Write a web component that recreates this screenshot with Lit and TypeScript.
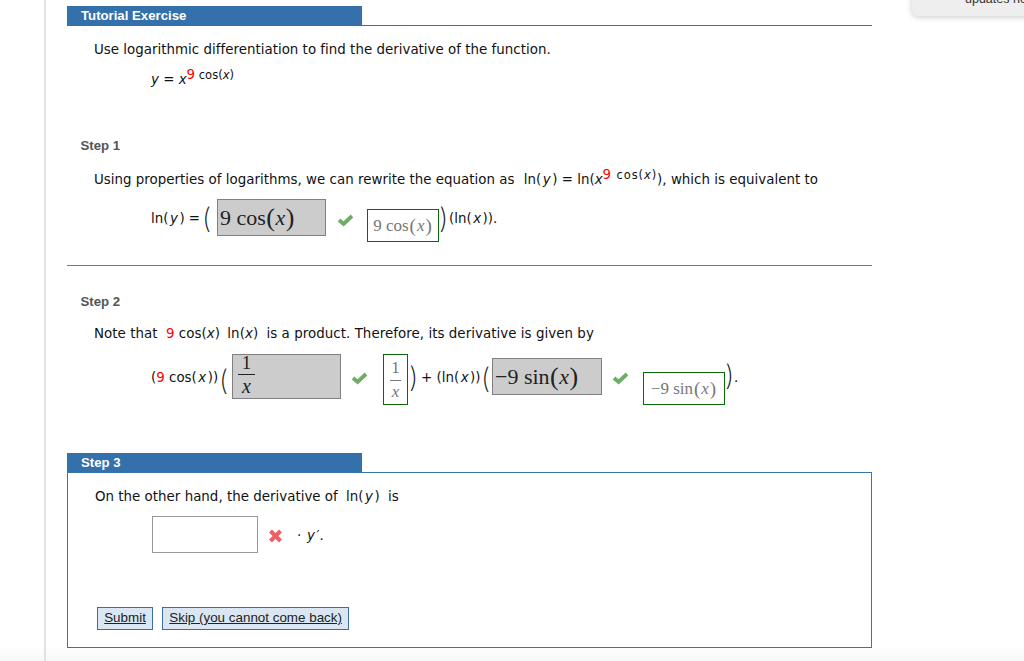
import { LitElement, html, css } from "lit";
import { customElement } from "lit/decorators.js";

const check = html`<svg class="mark" width="17" height="14" viewBox="0 0 17 14"><path d="M2 7 L6.6 11 L15 3" fill="none" stroke="#6cae63" stroke-width="3.8"/></svg>`;
const cross = html`<svg class="mark" width="15" height="14" viewBox="0 0 15 14"><path d="M2.5 2 L12.5 12 M12.5 2 L2.5 12" fill="none" stroke="#ee5f63" stroke-width="4"/></svg>`;

@customElement("app-root")
export class AppRoot extends LitElement {
  static styles = css`
    :host { display: block; height: 661px; overflow: hidden; position: relative; background: #fff; color: #111;
      font-family: "DejaVu Sans", Verdana, sans-serif; font-size: 13.4px; }
    .shade { position: absolute; left: 0; right: 0; bottom: 0; height: 16px; background: linear-gradient(#fff, #f8f8f8); }
    .page { position: relative; box-sizing: border-box; height: 661px; margin-left: 44px; width: 828px; padding: 6px 0 0 21px; border-left: 2px solid #e2e2e2; }
    .main { width: 805px; }
    .bar { height: 19px; width: 295px; background: #3470aa; color: #fff; font: bold 13.2px/20px "Liberation Sans", Arial, sans-serif; padding-left: 14px; box-sizing: border-box; }
    .rule { height: 1px; background: #3470aa; }
    .line { height: 20px; line-height: 22px; white-space: nowrap; padding-left: 27px; }
    .wide { letter-spacing: .05px; }
    .tight { letter-spacing: .015px; }
    .step { height: 20px; padding-left: 13.5px; font: bold 13.2px/22px "Liberation Sans", Arial, sans-serif; color: #555; }
    .eq { padding-left: 84px; }
    i { font-style: italic; }
    i.w { margin: 0 1.5px; }
    .red { color: #f00; }
    sup { font-size: 11.5px; line-height: 0; vertical-align: 5px; }
    sup.sw { letter-spacing: .9px; }
    sup .red { font-size: 13.4px; }
    .sp { display: inline-block; width: 4px; }
    .sp2 { display: inline-block; width: 3px; }
    .sp3 { display: inline-block; width: 5px; }
    .row { display: flex; align-items: flex-start; margin-left: 84px; white-space: nowrap; }
    .t { line-height: 22px; }
    .p { flex: none; width: 9px; text-align: center; font: 200 28px/38px Inter, sans-serif; color: #222; }
    .tex { font-family: "Liberation Serif", "Times New Roman", serif; }
    .ans { box-sizing: border-box; background: #ccc; border: 1px solid #808080; color: #222; font-size: 22px; display: flex; align-items: center; padding-left: 2px; }
    .given { box-sizing: border-box; border: 1px solid #0a6a0a; color: #777; font-size: 17px; display: flex; align-items: center; justify-content: center; background: #fff; }
    .bp { font-size: 26px; line-height: 1; margin: 0 .5px; }
    .gp { font-size: 19px; line-height: 1; margin: 0 1px; }
    .mark { flex: none; }
    .frac { display: inline-flex; flex-direction: column; align-items: center; }
    .frac span:first-child { border-bottom: 1px solid currentColor; width: 100%; text-align: center; }
    .big { font-size: 19px; margin: -3px 0 0 3px; width: 17px; }
    .big span:first-child { line-height: 16px; padding-bottom: 3px; }
    .big span:last-child { font-size: 20px; line-height: 20px; font-style: italic; margin-top: 1px; }
    .small { font-size: 17px; width: 11px; }
    .small span:first-child { line-height: 17px; padding-bottom: 4px; }
    .small span:last-child { font-style: italic; line-height: 17px; padding-top: 2px; }
    hr { border: 0; height: 1px; background: #777; margin: 23px 0 0; }
    .box { box-sizing: border-box; height: 176px; border: 1px solid #3a74ad; padding-top: 13px; width: 805px; }
    input { display: block; box-sizing: border-box; width: 106px; height: 37px; border: 1px solid #999; background: #fff; padding: 0; margin: 0; }
    .btns { display: flex; gap: 9px; margin: 54px 0 0 29px; }
    .btn { box-sizing: border-box; height: 23px; padding: 0 6.2px; background: #dae6f1; border: 1px solid #3b6ea5; color: #222; font: 13.4px/20px "Liberation Sans", Arial, sans-serif; text-decoration: underline; }
    .pop { position: absolute; top: -14px; right: -10px; width: 122px; height: 30px; box-sizing: border-box; background: #eee; border-radius: 6px; box-shadow: 0 1px 6px rgba(0,0,0,.22); font: 12.5px/16px "Liberation Sans", Arial, sans-serif; color: #333; padding: 5px 0 0 53px; white-space: nowrap; overflow: hidden; }
  `;

  render() {
    return html`
      <div class="shade"></div>
      <div class="page"><div class="main">
        <div class="bar">Tutorial Exercise</div>
        <div class="rule"></div>
        <div class="line tight" style="margin-top:13px">Use logarithmic differentiation to find the derivative of the function.</div>
        <div class="line eq" style="margin-top:10px"><i>y</i> = <i>x</i><sup><span class="red">9</span> cos(<i>x</i>)</sup></div>
        <div class="step" style="margin-top:46px">Step 1</div>
        <div class="line tight" style="margin-top:14px">Using properties of logarithms, we can rewrite the equation as<span class="sp3"></span> ln(<i class="w">y</i>) = ln(<i>x</i><sup class="sw"><span class="red">9</span> cos(<i>x</i>)</sup>), which is equivalent to</div>
        <div class="row" style="margin-top:10px;height:43px">
          <span class="t" style="margin-top:9px;width:47px">ln(<i class="w">y</i>) =</span>
          <span class="p" style="margin:0 6px 0 4px">(</span>
          <div class="ans tex" style="width:109px;height:37px">9 cos<span class="bp">(</span><i>x</i><span class="bp">)</span></div>
          <span style="margin:14px 13px 0 11px">${check}</span>
          <div class="given tex" style="width:72px;height:33px;margin-top:10px">9 cos <span class="gp">(</span><i>x</i><span class="gp">)</span></div>
          <span class="p">)</span>
          <span class="t" style="margin:9px 0 0 1px">(ln(<i class="w">x</i>)).</span>
        </div>
        <hr />
        <div class="step" style="margin-top:25px">Step 2</div>
        <div class="line wide" style="margin-top:12px">Note that<span class="sp"></span> <span class="red">9</span> cos(<i>x</i>)<span class="sp2"></span> ln(<i>x</i>)<span class="sp"></span> is a product. Therefore, its derivative is given by</div>
        <div class="row" style="margin-top:11px;height:50px">
          <span class="t" style="margin-top:13px;width:68px">(<span class="red">9</span> cos(<i class="w">x</i>))</span>
          <span class="p" style="margin:7px 4px 0 0">(</span>
          <div class="ans tex" style="width:109px;height:45px"><span class="frac big tex"><span>1</span><span>x</span></span></div>
          <span style="margin:17px 15px 0 10px">${check}</span>
          <div class="given tex" style="width:25px;height:51px"><span class="frac small tex"><span>1</span><span>x</span></span></div>
          <span class="p" style="margin:4px 0 0 1px">)</span>
          <span class="t" style="margin:13px 0 0 3px;width:60px">+ (ln(<i class="w">x</i>))</span>
          <span class="p" style="margin:5px 2px 0 0">(</span>
          <div class="ans tex" style="width:110px;height:37px;margin-top:4px">−9 sin<span class="bp">(</span><i>x</i><span class="bp">)</span></div>
          <span style="margin:17px 14px 0 10px">${check}</span>
          <div class="given tex" style="width:82px;height:33px;margin-top:18px">−9 sin <span class="gp">(</span><i>x</i><span class="gp">)</span></div>
          <span class="p" style="margin-top:2px">)</span>
          <span class="t" style="margin-top:13px">.</span>
        </div>
        <div class="bar" style="margin-top:49px">Step 3</div>
        <div class="box">
          <div class="line tight">On the other hand, the derivative of<span class="sp"></span> ln(<i class="w">y</i>)<span class="sp"></span> is</div>
          <div class="row" style="margin-top:10px">
            <input aria-label="answer" />
            <span style="margin:13px 14px 0 10px">${cross}</span>
            <span class="t" style="margin-top:9px">· <i class="w">y</i>′.</span>
          </div>
          <div class="btns"><span class="btn">Submit</span><span class="btn">Skip (you cannot come back)</span></div>
        </div>
      </div></div>
      <div class="pop">updates no</div>
    `;
  }
}
